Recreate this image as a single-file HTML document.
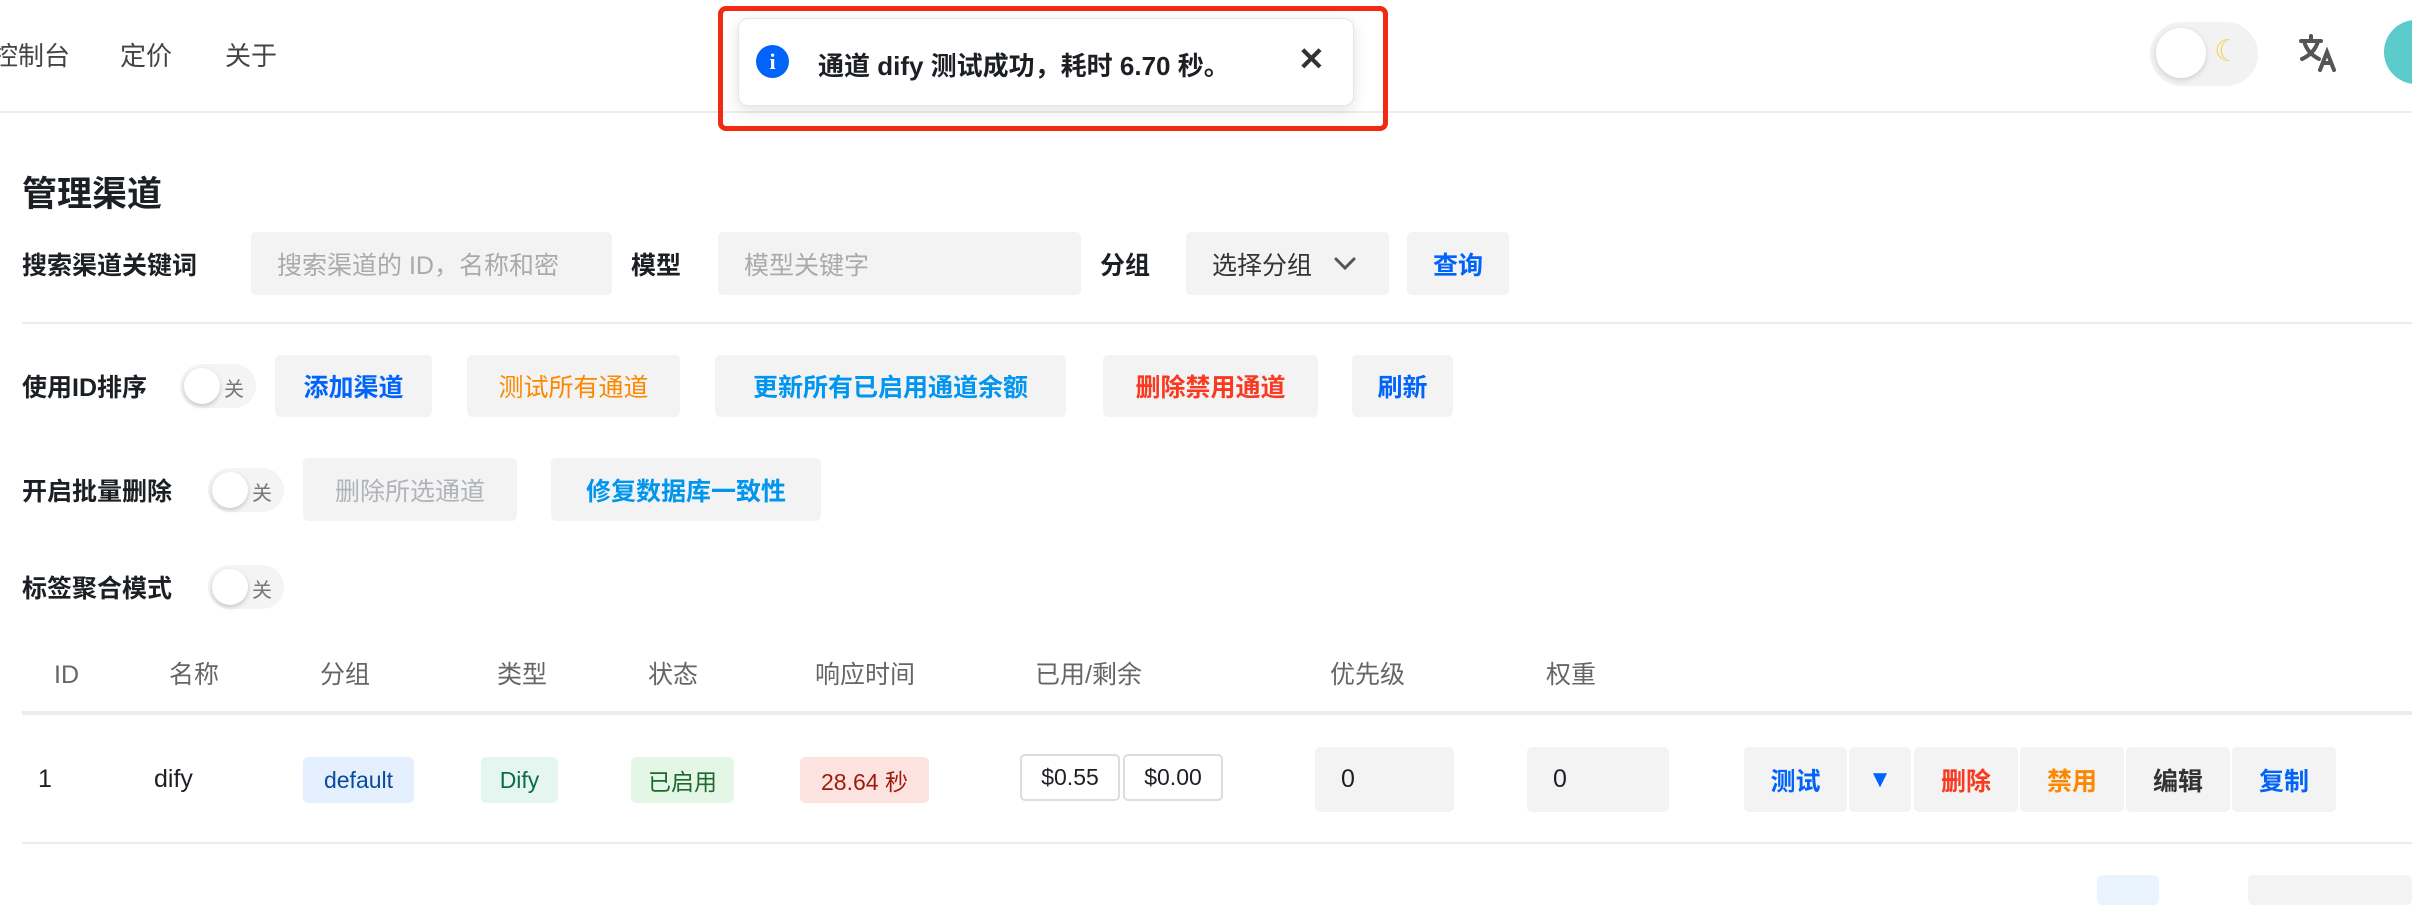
<!DOCTYPE html>
<html><head><meta charset="utf-8"><style>
*{box-sizing:border-box;margin:0;padding:0}
body{width:2412px;height:892px;background:#fff;font-family:"Liberation Sans","Noto Sans CJK SC",sans-serif;position:relative;overflow:hidden;color:#1c1f23;font-size:25px}
.a{position:absolute}
.c{display:flex;align-items:center;justify-content:center}
.btn{position:absolute;background:#f3f3f4;border-radius:5px;display:flex;align-items:center;justify-content:center;font-weight:bold;font-size:25px}
.blue{color:#0064fa}.orange{color:#fc8800}.red{color:#f93920}.lb{color:#0095ee}.gray{color:#b0b3b8;font-weight:normal}
.lbl{position:absolute;font-weight:bold;font-size:25px;transform:translateY(-50%)}
.tog{position:absolute;width:76px;height:44px;border-radius:22px;background:#f4f4f5}
.tog .k{position:absolute;left:4px;top:4px;width:36px;height:36px;border-radius:50%;background:#fff;box-shadow:0 2px 5px rgba(0,0,0,.2)}
.tog span{position:absolute;left:44px;top:9px;font-size:20px;color:#777}
.th{position:absolute;top:660px;color:#666;font-size:25px;line-height:30px}
.tag{position:absolute;border-radius:5px;display:flex;align-items:center;justify-content:center;font-size:23px}
.inp{position:absolute;background:#f3f3f4;border-radius:5px;color:#aaa;display:flex;align-items:center;padding-left:26px}
</style></head><body>
<div class="a" style="left:-8px;top:36px;color:#444;font-size:26px">控制台</div>
<div class="a" style="left:120px;top:36px;color:#444;font-size:26px">定价</div>
<div class="a" style="left:225px;top:36px;color:#444;font-size:26px">关于</div>
<div class="a" style="left:0;top:111px;width:2412px;height:2px;background:#ececec"></div>
<div class="a" style="left:738px;top:18px;width:616px;height:88px;border-radius:10px;background:#fff;border:1px solid #e6e6e6;box-shadow:0 4px 14px rgba(0,0,0,.12)"></div>
<div class="a c" style="left:756px;top:45px;width:33px;height:33px;border-radius:50%;background:#0064fa;color:#fff;font-weight:bold;font-size:22px;font-family:'Liberation Serif',serif">i</div>
<div class="a" style="left:818px;top:46px;font-size:26px;color:#1c1f23;font-weight:bold">通道 dify 测试成功，耗时 6.70 秒。</div>
<div class="a" style="left:1298px;top:40px;font-size:32px;color:#333;font-weight:bold">✕</div>
<div class="a" style="left:718px;top:6px;width:670px;height:125px;border:5px solid #f22a12;border-radius:8px"></div>
<div class="a" style="left:2150px;top:22px;width:108px;height:64px;border-radius:32px;background:#f2f2f3"></div>
<div class="a" style="left:2156px;top:28px;width:50px;height:50px;border-radius:50%;background:#fff;box-shadow:0 2px 6px rgba(0,0,0,.15)"></div>
<div class="a" style="left:2214px;top:34px;font-size:30px;color:#f2d45c">☾</div>
<svg class="a" style="left:2298px;top:33px" width="40" height="40" viewBox="0 0 40 40"><g stroke="#555" stroke-width="4" fill="none" stroke-linecap="round"><path d="M3 8h20M13 3v5M6 8q3 12 15 18M20 8q-3 12-16 18"/><path d="M22 37l7-18 7 18M25 30h8"/></g></svg>
<div class="a" style="left:2384px;top:20px;width:64px;height:64px;border-radius:50%;background:#5ccbcb"></div>
<div class="a" style="left:22px;top:166px;font-size:35px;font-weight:bold">管理渠道</div>
<div class="lbl" style="left:22px;top:264px">搜索渠道关键词</div>
<div class="inp" style="left:251px;top:232px;width:361px;height:63px">搜索渠道的 ID，名称和密</div>
<div class="lbl" style="left:631px;top:264px">模型</div>
<div class="inp" style="left:718px;top:232px;width:363px;height:63px">模型关键字</div>
<div class="lbl" style="left:1100px;top:264px">分组</div>
<div class="inp" style="left:1186px;top:232px;width:203px;height:63px;color:#333">选择分组<svg style="margin-left:22px" width="22" height="14" viewBox="0 0 22 14"><path d="M2 2l9 9 9-9" stroke="#555" stroke-width="3" fill="none" stroke-linecap="round"/></svg></div>
<div class="btn blue" style="left:1407px;top:232px;width:102px;height:63px">查询</div>
<div class="a" style="left:22px;top:322px;width:2390px;height:2px;background:#ececec"></div>
<div class="lbl" style="left:22px;top:386px">使用ID排序</div>
<div class="tog" style="left:180px;top:364px"><div class="k"></div><span>关</span></div>
<div class="btn blue" style="left:275px;top:355px;width:157px;height:62px">添加渠道</div>
<div class="btn orange" style="left:467px;top:355px;width:213px;height:62px;font-weight:normal">测试所有通道</div>
<div class="btn lb" style="left:715px;top:355px;width:351px;height:62px">更新所有已启用通道余额</div>
<div class="btn red" style="left:1103px;top:355px;width:215px;height:62px">删除禁用通道</div>
<div class="btn blue" style="left:1352px;top:355px;width:101px;height:62px">刷新</div>
<div class="lbl" style="left:22px;top:490px">开启批量删除</div>
<div class="tog" style="left:208px;top:468px"><div class="k"></div><span>关</span></div>
<div class="btn gray" style="left:303px;top:458px;width:214px;height:63px">删除所选通道</div>
<div class="btn lb" style="left:551px;top:458px;width:270px;height:63px">修复数据库一致性</div>
<div class="lbl" style="left:22px;top:587px">标签聚合模式</div>
<div class="tog" style="left:208px;top:565px"><div class="k"></div><span>关</span></div>
<div class="th" style="left:54px">ID</div>
<div class="th" style="left:169px">名称</div>
<div class="th" style="left:320px">分组</div>
<div class="th" style="left:497px">类型</div>
<div class="th" style="left:648px">状态</div>
<div class="th" style="left:815px">响应时间</div>
<div class="th" style="left:1035px">已用/剩余</div>
<div class="th" style="left:1330px">优先级</div>
<div class="th" style="left:1546px">权重</div>
<div class="a" style="left:22px;top:711px;width:2390px;height:4px;background:#ececec"></div>
<div class="a" style="left:38px;top:765px">1</div>
<div class="a" style="left:154px;top:765px">dify</div>
<div class="tag" style="left:303px;top:757px;width:111px;height:46px;background:#e4f0fd;color:#0a4a9e">default</div>
<div class="tag" style="left:481px;top:757px;width:77px;height:46px;background:#e5f6f0;color:#0d6b50">Dify</div>
<div class="tag" style="left:631px;top:757px;width:103px;height:46px;background:#e4f6e6;color:#1d6a2e">已启用</div>
<div class="tag" style="left:800px;top:757px;width:129px;height:46px;background:#fde3e0;color:#9e1a0c">28.64 秒</div>
<div class="tag" style="left:1020px;top:754px;width:100px;height:47px;border:2px solid #ddd;color:#1c1f23">$0.55</div>
<div class="tag" style="left:1123px;top:754px;width:100px;height:47px;border:2px solid #ddd;color:#1c1f23">$0.00</div>
<div class="inp" style="left:1315px;top:747px;width:139px;height:65px;color:#1c1f23;padding-left:26px">0</div>
<div class="inp" style="left:1527px;top:747px;width:142px;height:65px;color:#1c1f23;padding-left:26px">0</div>
<div class="btn blue" style="left:1744px;top:747px;width:103px;height:65px">测试</div>
<div class="btn blue" style="left:1849px;top:747px;width:62px;height:65px;font-size:24px">▼</div>
<div class="btn red" style="left:1914px;top:747px;width:104px;height:65px">删除</div>
<div class="btn orange" style="left:2020px;top:747px;width:104px;height:65px">禁用</div>
<div class="btn" style="left:2126px;top:747px;width:104px;height:65px;color:#333">编辑</div>
<div class="btn blue" style="left:2232px;top:747px;width:104px;height:65px">复制</div>
<div class="a" style="left:22px;top:842px;width:2390px;height:2px;background:#ececec"></div>
<div class="a" style="left:2097px;top:875px;width:62px;height:30px;border-radius:5px;background:#eaf4fe"></div>
<div class="a" style="left:2248px;top:875px;width:164px;height:30px;border-radius:5px;background:#f3f3f4"></div>
</body></html>
